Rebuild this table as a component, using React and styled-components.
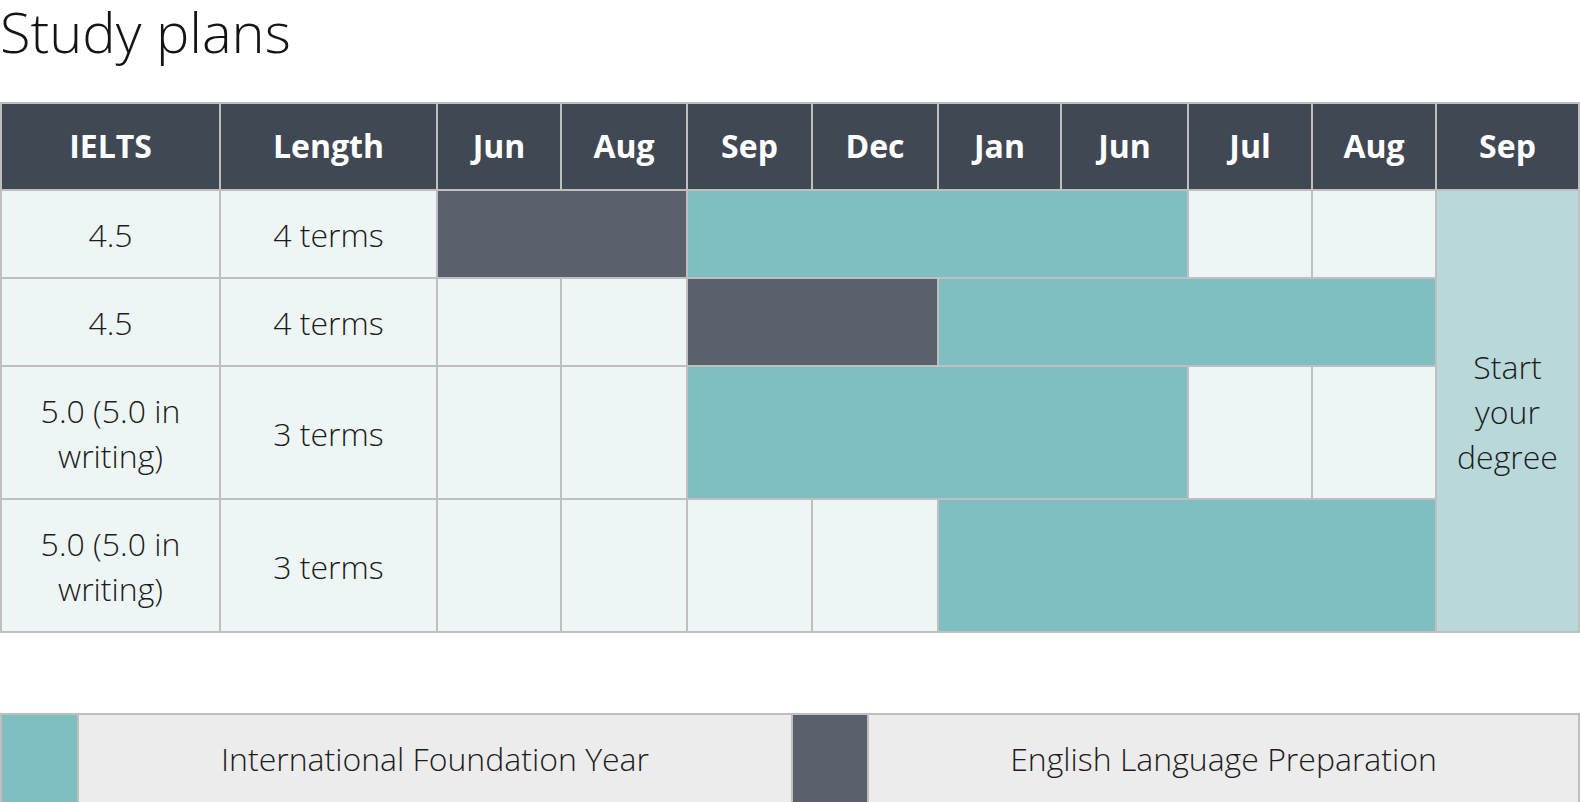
import React from 'react';
import styled, { createGlobalStyle } from 'styled-components';

const GlobalStyle = createGlobalStyle`
    html, body {
        margin: 0;
        padding: 0;
        background: #ffffff;
    }
    body {
        font-family: "Open Sans", "Liberation Sans", sans-serif;
        color: #1c1c1c;
    }
`;

const Page = styled.div`
    width: 1580px;
`;

const Title = styled.h1`
    margin: 0 0 40px 0;
    font-size: 56px;
    line-height: 62px;
    font-weight: 300;
    color: #141414;
`;

const Grid = styled.div`
    display: grid;
    grid-template-columns: 217px 215px 122px 124px 123px 124px 121px 125px 122px 122px 141px;
    gap: 2px;
    padding: 2px;
    background: #bfbfbf;
`;

const Head = styled.div`
    background: #404854;
    color: #ffffff;
    font-weight: 700;
    font-size: 32px;
    line-height: 45px;
    padding: 19px 4px 21px;
    text-align: center;
`;

const COLORS = {
    empty: '#eef6f5',
    elp: '#5b616c',
    ify: '#80bfc1',
    degree: '#b9d8da',
};

const Cell = styled.div`
    background: ${(p) => COLORS[p.$kind || 'empty']};
    grid-column: span ${(p) => p.$span || 1};
    grid-row: ${(p) => (p.$rows ? `span ${p.$rows}` : 'auto')};
    font-weight: 300;
    font-size: 32px;
    line-height: 45px;
    padding: 21px 10px 20px;
    text-align: center;
    display: flex;
    align-items: center;
    justify-content: center;
`;

const Legend = styled.div`
    margin-top: 80px;
    display: grid;
    grid-template-columns: 75px 712px 74px 709px;
    gap: 2px;
    padding: 2px;
    background: #bfbfbf;
`;

const Swatch = styled.div`
    background: ${(p) => COLORS[p.$kind]};
`;

const LegendLabel = styled.div`
    background: #ececec;
    font-weight: 300;
    font-size: 32px;
    line-height: 45px;
    padding: 21px 12px;
    text-align: center;
`;

const months = ['Jun', 'Aug', 'Sep', 'Dec', 'Jan', 'Jun', 'Jul', 'Aug', 'Sep'];

// each row: ielts, length, then month blocks [kind, span]
const plans = [
    { ielts: '4.5', length: '4 terms', blocks: [['elp', 2], ['ify', 4], ['empty', 1], ['empty', 1]] },
    { ielts: '4.5', length: '4 terms', blocks: [['empty', 1], ['empty', 1], ['elp', 2], ['ify', 4]] },
    { ielts: '5.0 (5.0 in writing)', length: '3 terms', blocks: [['empty', 1], ['empty', 1], ['ify', 4], ['empty', 1], ['empty', 1]] },
    { ielts: '5.0 (5.0 in writing)', length: '3 terms', blocks: [['empty', 1], ['empty', 1], ['empty', 1], ['empty', 1], ['ify', 4]] },
];


const App = () => {
    return (
        <Page>
            <GlobalStyle />
            <Title>Study plans</Title>

            <Grid>
                <Head>IELTS</Head>
                <Head>Length</Head>
                {months.map((m, idx) => <Head key={idx}>{m}</Head>)}

                {plans.map((plan, rIdx) => (
                    <React.Fragment key={rIdx}>
                        <Cell>{plan.ielts}</Cell>
                        <Cell>{plan.length}</Cell>
                        {plan.blocks.map(([kind, span], bIdx) => (
                            <Cell key={bIdx} $kind={kind} $span={span} />
                        ))}
                        {rIdx === 0 && <Cell $kind="degree" $rows={4}>Start your degree</Cell>}
                    </React.Fragment>
                ))}
            </Grid>

            <Legend>
                <Swatch $kind="ify" />
                <LegendLabel>International Foundation Year</LegendLabel>
                <Swatch $kind="elp" />
                <LegendLabel>English Language Preparation</LegendLabel>
            </Legend>
        </Page>
    );
};

export default App;
